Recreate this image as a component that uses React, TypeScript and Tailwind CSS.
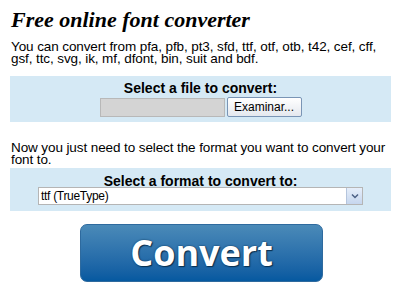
export default function App() {
  return (
    <div className="w-[400px] h-[308px] bg-white overflow-hidden" style={{ fontFamily: '"Liberation Sans", Arial, sans-serif' }}>
      <div className="pl-[10px] pr-[9px] pt-[9px]">
        <h1 className="pl-[1px] text-[22px] leading-[22px] font-bold italic text-black" style={{ fontFamily: '"Liberation Serif", Georgia, serif' }}>
          Free online font converter
        </h1>
        <p className="pl-[1px] mt-[10px] text-[13.5px] leading-[11.5px] tracking-[-0.1px] text-black">
          You can convert from pfa, pfb, pt3, sfd, ttf, otf, otb, t42, cef, cff, gsf, ttc, svg, ik, mf, dfont, bin, suit and bdf.
        </p>
        <div className="mt-[12px] h-[46px] bg-[#d5e9f5] flex flex-col items-center pt-[5px]">
          <div className="text-[14px] leading-[14px] font-bold text-black">Select a file to convert:</div>
          <div className="mt-[2px] flex items-center">
            <div className="w-[125px] h-[19px] bg-[#d4d4d4] border border-[#b8b8b8]"></div>
            <div className="ml-[2px] w-[75px] h-[20px] rounded-[2px] border border-[#7a95b5] bg-gradient-to-b from-[#ffffff] to-[#e4e8ee] text-[12px] leading-[18px] text-center text-black">
              Examinar...
            </div>
          </div>
        </div>
        <p className="pl-[1px] mt-[20px] text-[13.5px] leading-[11.5px] tracking-[-0.1px] text-black">
          Now you just need to select the format you want to convert your font to.
        </p>
        <div className="mt-[3px] h-[43px] bg-[#d5e9f5] flex flex-col items-center pt-[7px]">
          <div className="text-[14px] leading-[12px] font-bold text-black">Select a format to convert to:</div>
          <div className="mt-0 w-[325px] h-[18px] bg-white border border-[#b5b5b5] flex items-center justify-between">
            <span className="pl-[2px] text-[12px] leading-[16px] text-black tracking-[-0.3px]">ttf (TrueType)</span>
            <div className="w-[16px] h-[16px] bg-gradient-to-b from-[#e6eefa] to-[#c6d6ee] border-l border-[#b5c5dd] flex items-center justify-center">
              <svg width="8" height="6" viewBox="0 0 8 6"><path d="M1 1.5 L4 4.5 L7 1.5" stroke="#4d6185" strokeWidth="1.5" fill="none" /></svg>
            </div>
          </div>
        </div>
        <div className="mt-[13px] flex justify-center pl-[2px]">
          <div className="w-[243px] h-[58px] rounded-[7px] bg-gradient-to-b from-[#4a8ab8] to-[#0559a0] border border-[#2e6a9e] flex items-center justify-center">
            <span className="text-white font-bold text-[36px] leading-none" style={{ fontFamily: '"Open Sans", sans-serif', textShadow: '0 0 2px #0a3050, 1px 1px 1px #0a3050' }}>Convert</span>
          </div>
        </div>
      </div>
    </div>
  );
}
